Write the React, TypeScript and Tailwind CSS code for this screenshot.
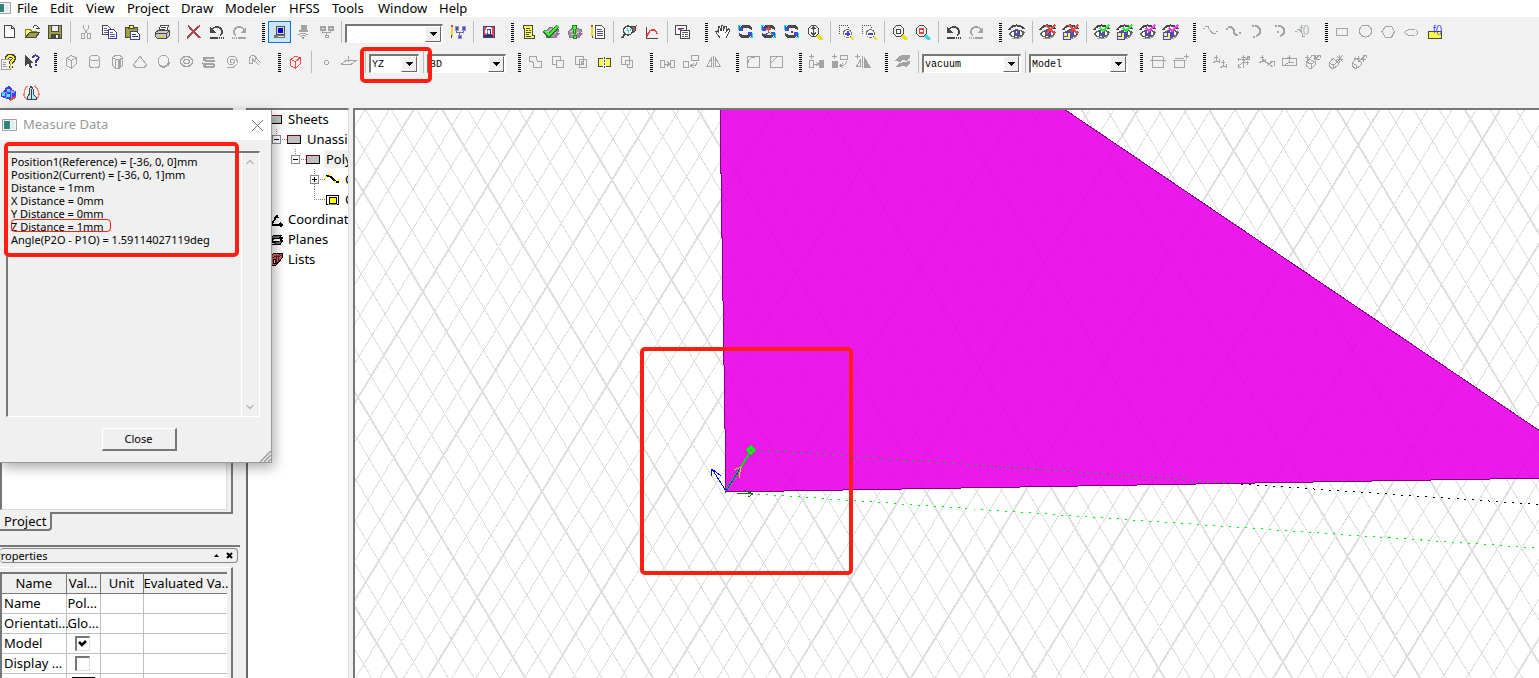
import type { ReactNode } from "react";
import { X, ChevronUp, ChevronDown } from "lucide-react";

const DARK = "#484848";
const OFF = "#a3a3a3";

const EYE = (
  <g fill="none">
    <path d="M1 6Q4 1 9 1.500Q14 2 16 5" stroke={DARK} strokeWidth="2" />
    <path d="M1.500 10Q8 3 16 8.500Q14 13 8 13.500Q4 13 1.500 10Z" fill="#fff" stroke="#606060" strokeWidth="1.500" />
    <path d="M4 14.500H11L15 12" stroke="#a0a0a0" />
    <circle cx="9" cy="9" r="3" fill="#5050c0" stroke="#505080" />
    <path d="M8.500 6.500v2" stroke="#fff" />
  </g>
);
const STAMP = (
  <g>
    <rect x="1.500" y="8.500" width="7" height="7" fill="#ffff60" stroke="#4040ff" />
    <path d="M1.500 12.500H5.500V8.500" fill="none" stroke="#4040ff" />
  </g>
);
const CROSS = <path d="M7 1L16 10M16 1L7 10" stroke="#f04848" strokeWidth="2" />;
const LENS = (
  <g fill="none">
    <path d="M11 11L16 16" stroke="#e8e020" strokeWidth="3" />
    <circle cx="7.500" cy="7" r="5.500" stroke={DARK} fill="#f4f4f4" />
  </g>
);
const ORBIT = (
  <g fill="none">
    <path d="M1 1h3v1H1zM1 2h1v4H1zM13 13h3v1h-3zM15 9h1v4h-1z" fill="#00e8ff" />
    <path d="M4 4.500L6 2.500H12L15 5M13 10.500L11 12.500H5L2 10" stroke={DARK} strokeWidth="2.500" />
    <path d="M2 2V7H6V5ZM15 13V8H11V10Z" fill="#4848f0" />
  </g>
);
const UNDO = (color: string) => (
  <g fill="none" stroke={color}>
    <path d="M3 7Q5 2.500 10 3Q15 5 14 9L12 11.500" strokeWidth="1.500" />
    <path d="M2 3V9H8Z" fill={color} stroke="none" />
    <path d="M2 13.500H10M11 13.500h1M13 13.500h1M15 13.500h1" strokeWidth="2" />
  </g>
);
const AXES = (x: number, y: number) => (
  <path d={`M${x} ${y - 3}V${y + 3}L${x - 3} ${y + 5}M${x} ${y + 3}H${x + 4}M${x - 2} ${y - 1}H${x + 2}M${x + 3} ${y + 1}V${y + 5}`} fill="none" stroke={OFF} />
);
const CHIP = (
  <g>
    <path d="M2 8L7 3L16 6L12 13L4 14Z" fill="#9c9c9c" stroke="#777" />
    <path d="M4 8L9 5M6 11L13 8" stroke="#d0d0d0" />
    <path d="M12 14L16 9" stroke="#c060c0" strokeWidth="2" />
  </g>
);
const NOTE = (x: string) => (
  <text x={x} y="9" fontSize="10" fontFamily="Liberation Sans, sans-serif" fill="currentColor">f()</text>
);

const ICONS: Record<string, ReactNode> = {
  "New": <path d="M4.500 1.500H11.500L14.500 4.500V13.500H4.500ZM11.500 1.500V4.500H14.500" fill="#fff" stroke={DARK} />,
  "Open": (
    <g stroke={DARK}>
      <path d="M2.500 13.500V5.500H7.500L8.500 7.500H13.500V13.500Z" fill="#ffff70" stroke="#808020" />
      <path d="M2.500 13.500L6.500 8.500H16.500L12.500 13.500Z" fill="#a0a040" />
      <path d="M10 3.500Q12 0 15 3V5M13 4.500H17" fill="none" />
    </g>
  ),
  "Save": (
    <g stroke={DARK}>
      <path d="M2.500 1.500H15.500V14.500H2.500Z" fill="#a0a040" strokeWidth="1.500" />
      <path d="M5.500 1.500H12.500V7.500H5.500Z" fill="#ececec" />
      <path d="M5 10H13V14H5Z" fill={DARK} />
      <path d="M10 11h2v3h-2z" fill="#eee" stroke="none" />
    </g>
  ),
  "Cut": (
    <g fill="none" stroke={OFF}>
      <path d="M6.500 1V4L11 10.500M11.500 1V4L7 10.500" />
      <ellipse cx="6" cy="12" rx="2" ry="2.500" />
      <ellipse cx="12" cy="12" rx="2" ry="2.500" />
    </g>
  ),
  "Copy": (
    <g fill="#fff">
      <path d="M2.500 1.500H7.500L10.500 4.500V10.500H2.500Z" stroke={DARK} />
      <path d="M4 4.500h3M4 6.500h5M4 8.500h5" stroke="#6060a0" />
      <path d="M8.500 5.500H13.500L16.500 8.500V14.500H8.500Z" stroke="#4040a0" />
      <path d="M10 8.500h3M10 10.500h5M10 12.500h5" stroke="#6060a0" />
    </g>
  ),
  "Paste": (
    <g>
      <path d="M2.500 3.500H14.500V13.500H2.500Z" fill="#a0a040" stroke={DARK} />
      <path d="M5.500 4.500L7 1.500H10L11.500 4.500Z" fill="#ffff40" stroke={DARK} />
      <path d="M7.500 7.500H13.500L16.500 10.500V15.500H7.500Z" fill="#fff" stroke="#4040a0" />
      <path d="M9 10.500h4M9 12.500h6" stroke="#4040a0" />
    </g>
  ),
  "Print": (
    <g stroke={DARK}>
      <path d="M6.500 1.500H14.500L12.500 7.500H4.500Z" fill="#fff" />
      <path d="M7 3.500h5M6 5.500h5" />
      <path d="M1.500 8.500L4 6.500H15.500V11.500L12.500 14.500H3.500L1.500 12.500Z" fill="#c8c8c8" />
      <path d="M1.500 9.500H12.500V14M12.500 9.500L15.500 7" fill="none" />
      <path d="M5 12h4v1H5z" fill="#e0e020" stroke="#d0d030" />
    </g>
  ),
  "Delete": <path d="M3 1.500L15 14M15 1.500L2 14" stroke="#a84848" strokeWidth="2" />,
  "Undo": UNDO(DARK),
  "Redo": <g transform="translate(17 0) scale(-1 1)">{UNDO(OFF)}</g>,
  "Local machine": (
    <g>
      <path d="M5.500 2.500H13.500V10.500H5.500Z" fill="#d8d8d8" stroke="#505050" />
      <path d="M7 4H12V9H7Z" fill="#0000e0" />
      <path d="M3.500 11.500H13.500V13.500H3.500Z" fill="#e8e8e8" stroke="#707070" />
      <path d="M4 12.500h3" stroke="#20c040" />
    </g>
  ),
  "Remote machine": (
    <g fill="none" stroke={OFF}>
      <path d="M7 1h5v4h-5zM5 6h8v1h-8z" fill={OFF} />
      <path d="M4 11Q9 7 14 11M6 13Q9 10 12 13" />
      <path d="M8 14h2" strokeWidth="2" />
    </g>
  ),
  "Distributed": (
    <g stroke={OFF} fill="none">
      <path d="M3.500 2.500h4v3h-4zM11.500 2.500h4v3h-4z" strokeWidth="2" />
      <path d="M5.500 6V8.500H13.500V6M9.500 8.500V12" />
      <path d="M8.500 11.500h3v2h-3z" />
    </g>
  ),
  "Edit distribution": (
    <g fill="none">
      <path d="M2.500 2V12" stroke="#f0d820" strokeWidth="2" />
      <path d="M2.500 1v2" stroke="#e04040" strokeWidth="2" />
      <path d="M2.500 11v3" stroke={DARK} />
      <path d="M6 2h3v4H6zM13 2h3v4h-3zM9 11h3v3H9z" fill="#4848d8" stroke="#9090b8" />
      <path d="M7 7V8.500H14V7M10.500 8.500V11" stroke="#6868b0" />
    </g>
  ),
  "Queue": (
    <g>
      <path d="M3 2h11v11H3z" fill="#f04848" stroke="#404080" />
      <path d="M4 11h9v2H4z" fill="#303070" />
      <path d="M6 4L8 3H11L12 5V10L10 11H7L5 9Z" fill="#f8f8ff" />
      <path d="M7 5h3v5H7z" fill="none" stroke="#3030a0" />
      <path d="M7 6v3" stroke="#00d8d8" />
    </g>
  ),
  "Message list": (
    <g>
      <path d="M3.500 1.500H12.500V11.500H14.500V14.500H4.500V4.500H3.500Z" fill="#ffff50" stroke={DARK} />
      <path d="M6 4.500h4M6 6.500h2M9 6.500h2M6 8.500h5M6 10.500h3M6 12.500h5" stroke={DARK} />
    </g>
  ),
  "Validate": (
    <g>
      {CHIP}
      <path d="M1 7L6 12L15 2" fill="none" stroke="#306830" strokeWidth="4" />
      <path d="M2 7L6 11L15 2" fill="none" stroke="#40f040" strokeWidth="2.500" />
    </g>
  ),
  "Analyze all": (
    <g>
      {CHIP}
      <path d="M6.500 1H10.500L9.500 9H7.500ZM7 11.500h3v3H7z" fill="#48f048" stroke="#308030" />
    </g>
  ),
  "Edit notes": (
    <g>
      <path d="M3 2V12" stroke="#f0d820" strokeWidth="2" />
      <path d="M3 1v2" stroke="#e04040" strokeWidth="2" />
      <path d="M3 12v2" stroke={DARK} />
      <path d="M6.500 1.500H12.500L15.500 4.500V14.500H6.500Z" fill="#fff" stroke={DARK} />
      <path d="M8 5.500h5M8 7.500h6M8 9.500h6M8 11.500h6" stroke="#505090" />
    </g>
  ),
  "Results": (
    <g>
      <path d="M10 3L16 2L15 7L12 9Z" fill="#a06060" stroke={DARK} />
      <circle cx="8" cy="6.500" r="4.500" fill="#e8fafa" stroke={DARK} strokeWidth="1.500" />
      <path d="M7 4L9 9M10 5V7" stroke="#40c8d8" />
      <path d="M5 10L2 14" stroke={DARK} strokeWidth="2" />
    </g>
  ),
  "Plot": (
    <g fill="none">
      <path d="M3.500 3V14.500H15" stroke={DARK} />
      <path d="M4 13Q6 6 9 6Q13 5 14 10" stroke="#f04040" strokeWidth="1.500" />
    </g>
  ),
  "Copy image": (
    <g fill="#fff" stroke={DARK}>
      <path d="M1.500 1.500H12.500V10.500H1.500Z" />
      <path d="M4 4.500H10" stroke="#4040c0" />
      <path d="M4 6L7 5L10 9" stroke="#f04040" fill="none" />
      <path d="M6.500 6.500H15.500V14.500H6.500Z" />
      <path d="M8 8.500h6M8 10.500h2M11 10.500h3M8 12.500h2M11 12.500h3" stroke="#606060" />
    </g>
  ),
  "Pan": (
    <path d="M6 14L2.500 9L1.500 7.500L3.500 7L5 9L4 3L5.500 2.500L7 7V1.500H9L9.500 7L11 2L12.500 2.500L12 8L14.500 5L16 6L13 12L12 14" fill="#fff" stroke={DARK} />
  ),
  "Rotate model": ORBIT,
  "Rotate axis": (
    <g>
      {ORBIT}
      <path d="M9 8L4 12" fill="none" stroke="#4040f0" />
      <path d="M9 8L14 12" fill="none" stroke="#40c040" />
      <path d="M8.500 2V8M6 5h5" stroke="#f04040" strokeWidth="1.500" />
    </g>
  ),
  "Rotate screen": <g>{ORBIT}<path d="M8 7h2v2H8z" fill={DARK} /></g>,
  "Dynamic zoom": <g>{LENS}<path d="M7.500 4V10M5.500 5.500L7.500 3L9.500 5.500M5.500 8.500L7.500 11L9.500 8.500" fill="none" stroke={DARK} strokeWidth="1.500" /></g>,
  "Zoom in": (
    <g fill="none">
      <path d="M2.500 10V1.500H11V5" stroke={DARK} strokeDasharray="1 1" />
      <path d="M13 12L17 16" stroke="#e8e020" strokeWidth="2.500" />
      <circle cx="10.500" cy="9.500" r="4" stroke="#707070" fill="#fff" />
      <path d="M8 9.500H13M10.500 7V12" stroke="#4040ff" strokeWidth="2" />
    </g>
  ),
  "Zoom out": (
    <g fill="none">
      <path d="M2.500 10V1.500H11V5" stroke={DARK} strokeDasharray="1 1" />
      <path d="M13 12L17 16" stroke="#e8e020" strokeWidth="2.500" />
      <circle cx="10.500" cy="9.500" r="4" stroke="#707070" fill="#fff" />
      <path d="M8 9.500H13" stroke="#4040ff" strokeWidth="2" />
    </g>
  ),
  "Fit all": <g>{LENS}<path d="M5.500 5h4v4h-4z" fill="none" stroke={DARK} /></g>,
  "Fit selection": (
    <g>
      <path d="M11 11L16 16" stroke="#40d8d8" strokeWidth="3" />
      <circle cx="7.500" cy="7" r="5.500" stroke={DARK} fill="#f4f4f4" />
      <path d="M5.500 5h4v4h-4z" fill="none" stroke="#f04040" strokeWidth="1.500" />
    </g>
  ),
  "Show": EYE,
  "Hide selection": <g>{EYE}{CROSS}</g>,
  "Hide in view": <g>{EYE}{CROSS}{STAMP}</g>,
  "Show all": <g>{EYE}<path d="M7 4L10 7L16 1" fill="none" stroke="#30f040" strokeWidth="2" /></g>,
  "Show all in view": <g>{EYE}<path d="M7 4L10 7L16 1" fill="none" stroke="#30f040" strokeWidth="2" />{STAMP}</g>,
  "Show selection": <g>{EYE}<path d="M7 4L10 7L16 1" fill="none" stroke="#f040f0" strokeWidth="2" /></g>,
  "Show selection in view": <g>{EYE}<path d="M7 4L10 7L16 1" fill="none" stroke="#f040f0" strokeWidth="2" />{STAMP}</g>,
  "Line": <path d="M1 4.500H3M3 2.500H6V4L11 9.500H14M14 7.500h2" fill="none" stroke={OFF} />,
  "Spline": <path d="M1 5h2M3 3h3M6 3L9 6V9L11 11H13M14 9h2" fill="none" stroke={OFF} strokeWidth="1.500" />,
  "Arc": <path d="M4 2h2M7 2H9Q12 3 12 7T8 12M5 13h2" fill="none" stroke={OFF} strokeWidth="2" />,
  "Center arc": <path d="M4 2h2M7 2H9Q13 3 13 7T9 12M6 8h2" fill="none" stroke={OFF} strokeWidth="2" />,
  "Equation curve": <g color={OFF}><path d="M1 7h2M3 5h2L8 9V12H11" fill="none" stroke={OFF} />{NOTE("6")}</g>,
  "Rectangle": <path d="M2.500 4.500H13.500V11.500H2.500Z" fill="none" stroke={OFF} />,
  "Circle": <circle cx="8.500" cy="7" r="6" fill="none" stroke={OFF} />,
  "Polygon": <path d="M5.500 2.500H11.500L14.500 7.500L11.500 13.500H5.500L2 7.500Z" fill="none" stroke={OFF} />,
  "Ellipse": <ellipse cx="8.500" cy="8.500" rx="6.500" ry="3" fill="none" stroke={OFF} />,
  "Equation surface": (
    <g color="#4040ff">
      <path d="M2.500 7.500H15.500V14.500H2.500Z" fill="#ffff40" stroke={DARK} strokeWidth="1.500" />
      {NOTE("7")}
    </g>
  ),
  "Help topics": (
    <g fill="none">
      <path d="M1.500 5.500H10.500V15.500H1.500Z" fill="#f4f4f4" stroke="#a0a0a0" />
      <path d="M3 8.500h3M3 10.500h3M3 12.500h4" stroke="#999" />
      <path d="M7 5V3.500Q10 0 13 2.500Q16 5 11 8V10M11 12v2" stroke="#404040" strokeWidth="4" />
      <path d="M7 5V3.500Q10 1 13 3Q15 5 11 8V10M11 12v2" stroke="#fff020" strokeWidth="2" />
    </g>
  ),
  "Context help": (
    <g>
      <path d="M2 1V12L5 9L7 14H9L7.500 9H11Z" fill={DARK} />
      <path d="M10 4V2.500Q13 0 15.500 3Q16 5 13 7V9M12 11h2" fill="none" stroke="#404098" strokeWidth="2" />
    </g>
  ),
  "Box": <path d="M3.500 4.500L8 1.500L13.500 3.500V9.500L8.500 14.500L3.500 11.500ZM3.500 4.500L8.500 6.500L13.500 3.500M8.500 6.500V14.500" fill="none" stroke={OFF} />,
  "Cylinder": <path d="M3.500 4Q3.500 1.500 8.500 1.500T13.500 4V11Q13.500 14 8.500 14T3.500 11ZM3.500 4Q4 6.500 8.500 6.500T13.500 4" fill="none" stroke={OFF} />,
  "Regular polyhedron": <g><path d="M3.500 3.500L6 1.500H11L13.500 3.500V11.500L11 14H6L3.500 11.500ZM3.500 3.500L6 5H11L13.500 3.500M6.500 5V14" fill="none" stroke={OFF} /><path d="M9 5h3v9H9z" fill={OFF} /></g>,
  "Cone": <path d="M8 2L14.500 11L12 13.500H4L1.500 11Z" fill="none" stroke={OFF} />,
  "Sphere": <g fill="none" stroke={OFF}><circle cx="8.500" cy="7" r="5.500" /><path d="M4 11Q8.500 14.500 13 11L14 8" strokeWidth="2" /></g>,
  "Torus": <g fill="none" stroke={OFF}><ellipse cx="8.500" cy="7.500" rx="6" ry="5" strokeWidth="1.500" /><ellipse cx="8.500" cy="7.500" rx="3" ry="2" strokeWidth="1.500" /></g>,
  "Helix": <path d="M2 3H13V5H5V6H14V8H4V7H2V9H13V11H5V12H12L14 9V12L12 14H3L2 12V10H1V8H2Z" fill={OFF} />,
  "Spiral": <path d="M3 13Q10 15 13 10Q14 3 9 2Q3 2 3 7Q4 11 8 11Q11 9 10 6Q8 4 6 6V8H8" fill="none" stroke={OFF} />,
  "Bondwire": <path d="M2.500 10V4L4.500 1.500H7L14.500 9.500M5.500 10V5L12 11M2 9.500H6M8 3V6" fill="none" stroke={OFF} />,
  "Region": <path d="M3.500 5.500L8 2.500L13.500 3.500V9.500L8.500 14.500L3.500 11.500ZM3.500 5.500L8.500 7.500L13.500 3.500M8.500 7.500V14.500" fill="none" stroke="#f04848" />,
  "Point": <circle cx="8.500" cy="8.500" r="2" fill="none" stroke={OFF} />,
  "Plane": <path d="M0 10.500L5 6.500H15L10 10.500ZM7.500 2V8" fill="none" stroke={OFF} />,
  "Unite": <path d="M2.500 2.500H9.500V5.500L11 7.500H14.500V13.500H6.500V9L5 7.500H2.500Z" fill="none" stroke={OFF} />,
  "Subtract": <path d="M2.500 2.500H10.500V6.500H6.500V10.500H2.500ZM6.500 6.500H13.500V13.500H6.500V10" fill="none" stroke={OFF} />,
  "Intersect": <path d="M2.500 2.500H10.500V10.500H2.500ZM6.500 5.500H13.500V13.500H6.500ZM8 7.500h2v2H8z" fill="none" stroke={OFF} />,
  "Split": <g><path d="M2.500 4.500H14.500V12.500H2.500Z" fill="#ffff48" stroke={DARK} /><path d="M8.500 3V14" stroke="#f8f8f8" strokeWidth="3" /><path d="M8.500 3V14" stroke={DARK} strokeDasharray="2 1" /></g>,
  "Imprint": <path d="M2.500 2.500H10.500V10.500H2.500ZM6.500 10V6.500H13.500V13.500H8.500V10" fill="none" stroke={OFF} />,
  "Move": <path d="M1.500 6.500H5.500V13.500H1.500ZM11.500 6.500H15.500V13.500H11.500ZM6 10H10M8 7.500L10.500 10L8 12.500" fill="none" stroke={OFF} />,
  "Rotate": <path d="M1.500 7.500H6.500V13.500H1.500ZM9.500 1.500H16.500V6.500H9.500ZM15 8Q15 12 9 12M12 9L8.500 12L12 14" fill="none" stroke={OFF} />,
  "Mirror": <path d="M8.500 2V14M6.500 4V12.500H1.500ZM10.500 4V12.500H15.500Z" fill="none" stroke={OFF} />,
  "Fillet": <path d="M2.500 13.500V2.500H14.500V13.500ZM3 9Q4 3 10 3" fill="none" stroke={OFF} />,
  "Chamfer": <path d="M2.500 13.500V2.500H14.500V13.500ZM2.500 9.500L9.500 2.500" fill="none" stroke={OFF} />,
  "Duplicate line": <g stroke={OFF} fill="none"><path d="M3.500 0V5M1 2.500H6M1.500 6.500H5.500V13.500H1.500ZM6 10H10M8 8L10.500 10L8 12" /><path d="M11 6h5v8h-5z" fill={OFF} stroke="none" /></g>,
  "Duplicate axis": <g stroke={OFF} fill="none"><path d="M3.500 0V5M1 2.500H6M9.500 1.500H16.500V5.500H9.500ZM15.500 7Q15 12 9 11.500M12 9L9 11.500L12 14" /><path d="M1 7h6v7H1z" fill={OFF} stroke="none" /></g>,
  "Duplicate mirror": <g stroke={OFF} fill="none"><path d="M3.500 0V5M1 2.500H6M8.500 2V14M6.500 5V12.500H2.500Z" /><path d="M10.500 4V13H16Z" fill={OFF} /></g>,
  "Layers": <path d="M1 7L5 2L9 1H16V3L13 7L9 6L6 8ZM1 13L5 9L10 8L16 7V9L13 13L9 12L5 13Z" fill={OFF} />,
  "Section": <path d="M3 2.500H14M3.500 3V6M14.500 3V6M1 6.500H16.500M3.500 7V13.500H14.500V7" fill="none" stroke={OFF} />,
  "Section add": <path d="M1 6.500H14M2.500 7V13.500H12.500V7M3 4.500H12M14.500 0V5M12 2.500H17" fill="none" stroke={OFF} />,
  "Relative offset": <g>{AXES(4, 4)}{AXES(11, 9)}</g>,
  "Relative rotated": <path d="M8.500 1V14M6 3.500H11M8 8L3 13M3 10V13.500H6M3 5.500H14M3 4V7M8 7L14 3M12 2.500H14.500V6M8 8L14 9M12 7V11" fill="none" stroke={OFF} />,
  "Relative both": <g>{AXES(4, 4)}<path d="M4 5L15 13M15 7L9 12M12 7h4v5" fill="none" stroke={OFF} /></g>,
  "Face CS": <path d="M1.500 4.500H15.500V11.500H1.500ZM8 1V8.500L4 10.500M8 8.500H13M6 3.500h4" fill="none" stroke={OFF} />,
  "Object CS offset": <path d="M2 8L6 5.500L11 8V11L7 15L2 12ZM2 8L7 10V15M7 10L12 7M3 6V1M1 3h4M4 6L9 1M7 1.500h3v3M11 6V1M10 6L16 1M13 1h3v3M12 5h4" fill="none" stroke={OFF} />,
  "Object CS rotated": <path d="M2 9L6 4.500L11 8V11L6 15L2 12ZM2 9L6 11V15M6 11L11 8M12 1V9M10 5H16M10 8L16 1M10 2L16 8" fill="none" stroke={OFF} />,
  "Object CS both": <path d="M2 9L6 4.500L11 8V11L6 15L2 12ZM2 9L6 11V15M8 2V8M4 4H10M8 8L16 1M13 1h3v3M10 5h6M13 3v5" fill="none" stroke={OFF} />,
  "Mesh": (
    <g>
      <path d="M1 8L5 5V3L9 1L12 3V5L16 6V11L10 15L1 12Z" fill="#4040f0" />
      <path d="M2 8h3v3H2zM7 4h3v2H7zM7 9h3v3H7zM12 6h2v2h-2z" fill="#40f0ff" />
      <path d="M1 7L7 7L15 6M6 7V13M11 5V13" fill="none" stroke="#9098f8" />
      <path d="M10 15L16 11.500" stroke="#f04040" strokeWidth="2" />
    </g>
  ),
  "Radiation": (
    <g fill="none">
      <path d="M4 1Q0 6 1.500 12L4 15M12 1Q17 6 15.500 12L13 15" stroke="#f08070" strokeWidth="1.500" />
      <path d="M8 1L10 4V9L13 12V14H4V12L6.500 9V4Z" fill="#b8e8e8" stroke="#404070" />
      <path d="M8.500 4V15" stroke="#404040" />
    </g>
  ),
};

function Tool({ name, active = false }: { name: string; active?: boolean }) {
  return (
    <button
      type="button"
      title={name}
      aria-label={name}
      className={`flex h-[22px] w-[23px] shrink-0 items-center justify-center ${active ? "bg-[#cce4f7] outline outline-[#0078d7] -outline-offset-1" : ""}`}
    >
      <svg viewBox="0 0 17 16" className="h-4 w-[17px] shrink-0" shapeRendering="crispEdges" aria-hidden="true">
        {ICONS[name]}
      </svg>
    </button>
  );
}

function Tools({ names }: { names: string[] }) {
  return names.map((name) => <Tool key={name} name={name} />);
}

function Separator() {
  return (
    <div className="flex w-2 shrink-0 justify-center">
      <div className="h-[22px] w-px bg-[#bdbdbd]" />
    </div>
  );
}

function Grip() {
  return (
    <div className="flex w-[17px] shrink-0 justify-end pr-[3px]">
      <div className="h-[19px] w-[3px] bg-[repeating-linear-gradient(to_bottom,#000_0_1px,transparent_1px_2px)]" />
    </div>
  );
}

function Combo({ label, value, className }: { label: string; value: string; className: string }) {
  return (
    <div className={`mt-[3px] flex h-[19px] shrink-0 border-t-2 border-l-2 border-r border-b border-t-[#777] border-l-[#777] border-r-white border-b-white bg-white ${className}`}>
      <select
        aria-label={label}
        defaultValue={value}
        className="min-w-0 flex-1 appearance-none overflow-hidden bg-white px-px pt-px font-['Liberation_Mono','Noto_Sans_CJK_SC',monospace] text-[10px] leading-4 text-black outline-none"
      >
        <option>{value}</option>
      </select>
      <span className="pointer-events-none mr-px flex w-4 shrink-0 items-center justify-center border border-t-white border-l-white border-r-[#696969] border-b-[#696969] bg-[#f0f0f0]">
        <svg viewBox="0 0 7 4" className="h-1 w-[7px]" shapeRendering="crispEdges" aria-hidden="true">
          <path d="M0 0H7L3.500 4Z" />
        </svg>
      </span>
    </div>
  );
}

function WindowIcon() {
  return (
    <svg viewBox="0 0 15 12" className="h-3 w-[15px] shrink-0" aria-hidden="true">
      <path d="M.5.5H14.500V11.500H.5Z" fill="#f4f4f4" stroke="#9aa4a8" />
      <path d="M2 2H8V10H2Z" fill="#2f8577" />
      <path d="M9 2h3v8H9z" fill="#dfe9ee" />
    </svg>
  );
}

const MENUS = [
  { label: "File", width: "w-[33px]" },
  { label: "Edit", width: "w-[36px]" },
  { label: "View", width: "w-[41px]" },
  { label: "Project", width: "w-[54px]" },
  { label: "Draw", width: "w-[44px]" },
  { label: "Modeler", width: "w-[64px]" },
  { label: "HFSS", width: "w-[43px]" },
  { label: "Tools", width: "w-[46px]" },
  { label: "Window", width: "w-[61px]" },
  { label: "Help", width: "w-[40px]" },
];

function MenuBar() {
  return (
    <nav className="flex h-[17px] items-center overflow-hidden bg-white pb-[2px]" aria-label="Main menu">
      <div className="-ml-1 mr-[6px] flex">
        <WindowIcon />
      </div>
      {MENUS.map((menu) => (
        <button key={menu.label} type="button" className={`shrink-0 text-left text-[13px] leading-4 ${menu.width}`}>
          {menu.label}
        </button>
      ))}
    </nav>
  );
}

function Toolbars() {
  return (
    <div className="bg-[#f1f1f1] pb-px">
      <div className="-ml-[3px] flex h-[30px] items-center overflow-hidden" role="toolbar" aria-label="Standard">
        <Tools names={["New", "Open", "Save"]} />
        <Separator />
        <Tools names={["Cut", "Copy", "Paste"]} />
        <Separator />
        <Tool name="Print" />
        <Separator />
        <Tools names={["Delete", "Undo", "Redo"]} />
        <Grip />
        <Tool name="Local machine" active />
        <Tools names={["Remote machine", "Distributed"]} />
        <Separator />
        <Combo label="Configuration" value="" className="mr-[3px] w-[98px]" />
        <Tool name="Edit distribution" />
        <Separator />
        <Tool name="Queue" />
        <Grip />
        <Tools names={["Message list", "Validate", "Analyze all", "Edit notes"]} />
        <Separator />
        <Tools names={["Results", "Plot"]} />
        <Separator />
        <Tool name="Copy image" />
        <Grip />
        <Tools names={["Pan", "Rotate model", "Rotate axis", "Rotate screen", "Dynamic zoom"]} />
        <Separator />
        <Tools names={["Zoom in", "Zoom out"]} />
        <Separator />
        <Tools names={["Fit all", "Fit selection"]} />
        <Separator />
        <Tools names={["Undo", "Redo"]} />
        <Grip />
        <Tool name="Show" />
        <Separator />
        <Tools names={["Hide selection", "Hide in view"]} />
        <Separator />
        <Tools names={["Show all", "Show all in view", "Show selection", "Show selection in view"]} />
        <Grip />
        <Tools names={["Line", "Spline", "Arc", "Center arc", "Equation curve"]} />
        <Grip />
        <Tools names={["Rectangle", "Circle", "Polygon", "Ellipse", "Equation surface"]} />
      </div>
      <div className="-ml-[3px] flex h-[30px] items-center" role="toolbar" aria-label="Modeler">
        <Tools names={["Help topics", "Context help"]} />
        <Grip />
        <Tools names={["Box", "Cylinder", "Regular polyhedron", "Cone", "Sphere", "Torus", "Helix", "Spiral", "Bondwire"]} />
        <Grip />
        <Tool name="Region" />
        <Separator />
        <Tools names={["Point", "Plane"]} />
        <Separator />
        <div className="relative flex">
          <Combo label="Drawing plane" value="YZ" className="w-[50px]" />
          <div className="pointer-events-none absolute -top-[4px] -left-[9px] z-10 h-9 w-[72px] rounded-[5px] border-4 border-[#ff1f10]" />
        </div>
        <Separator />
        <Combo label="Movement mode" value="3D" className="mr-px w-[79px]" />
        <Grip />
        <Tools names={["Unite", "Subtract", "Intersect", "Split", "Imprint"]} />
        <Grip />
        <Tools names={["Move", "Rotate", "Mirror"]} />
        <Grip />
        <Tools names={["Fillet", "Chamfer"]} />
        <Grip />
        <Tools names={["Duplicate line", "Duplicate axis", "Duplicate mirror"]} />
        <Grip />
        <Tool name="Layers" />
        <Separator />
        <Combo label="Material" value="vacuum" className="w-[99px]" />
        <Separator />
        <Combo label="Object type" value="Model" className="mr-px w-[99px]" />
        <Grip />
        <Tools names={["Section", "Section add"]} />
        <Grip />
        <Tools names={["Relative offset", "Relative rotated", "Relative both", "Face CS", "Object CS offset", "Object CS rotated", "Object CS both"]} />
      </div>
      <div className="-ml-[3px] flex h-[30px] items-center pt-0.5" role="toolbar" aria-label="Analysis">
        <Tools names={["Mesh", "Radiation"]} />
      </div>
    </div>
  );
}

const PROPERTIES = [
  { name: "Name", value: "Pol..." },
  { name: "Orientati...", value: "Glo..." },
  { name: "Model", checked: true },
  { name: "Display ...", checked: false },
];

function CheckCell({ label, checked }: { label: string; checked: boolean }) {
  return (
    <label className="relative mr-0.5 flex justify-center">
      <input
        type="checkbox"
        aria-label={label}
        defaultChecked={checked}
        className="peer h-[15px] w-[15px] appearance-none border-t-2 border-l-2 border-r border-b border-t-[#777] border-l-[#777] border-r-[#ddd] border-b-[#ddd] bg-white"
      />
      <svg viewBox="0 0 15 15" className="pointer-events-none invisible absolute h-[15px] w-[15px] peer-checked:visible" aria-hidden="true">
        <path d="M4 6L7 9L11 5" fill="none" stroke="#000" strokeWidth="2.500" />
      </svg>
    </label>
  );
}

function PropertiesPanel() {
  return (
    <section className="h-[133px] w-[240px] shrink-0 overflow-hidden border-t-2 border-[#777]" aria-label="Properties">
      <header className="mt-px mr-[2px] flex h-[15px] items-center overflow-hidden rounded-sm border border-l-0 border-[#888] pb-px text-[11px]">
        <h2 className="-ml-[6px] flex-1 leading-[13px]">Properties</h2>
        <button type="button" aria-label="Collapse" className="mr-[7px]">
          <svg viewBox="0 0 5 3" className="h-[3px] w-[5px]" aria-hidden="true"><path d="M0 3L2.500 0L5 3Z" /></svg>
        </button>
        <button type="button" aria-label="Close properties" className="mr-1">
          <svg viewBox="0 0 7 7" className="h-[7px] w-[7px]" aria-hidden="true"><path d="M1 1L6 6M6 1L1 6" stroke="#000" strokeWidth="2" /></svg>
        </button>
      </header>
      <div className="mt-1 mr-[7px] border-t border-r-2 border-t-white border-r-[#777] pt-1 pr-1">
        <table className="w-full table-fixed border-collapse border-t-2 border-l-2 border-[#777] bg-white text-[13px] leading-4">
          <colgroup>
            <col className="w-[65px]" />
            <col className="w-[34px]" />
            <col className="w-[43px]" />
            <col />
          </colgroup>
          <thead>
            <tr className="h-5 bg-[#f0f0f0]">
              {["Name", "Val...", "Unit", "Evaluated Va.."].map((title) => (
                <th key={title} scope="col" className="border-r border-b border-[#777] p-0 text-center font-normal whitespace-nowrap last:border-r-0">
                  {title}
                </th>
              ))}
            </tr>
          </thead>
          <tbody>
            {PROPERTIES.map((row) => (
              <tr key={row.name} className="h-5">
                <td className="border-r border-b border-[#c0c0c0] p-0 pl-0.5 whitespace-nowrap">{row.name}</td>
                <td className="border-r border-b border-[#c0c0c0] p-0 pl-px whitespace-nowrap">
                  {row.checked === undefined ? row.value : <CheckCell label={row.name} checked={row.checked} />}
                </td>
                <td className="border-r border-b border-[#c0c0c0] p-0" />
                <td className="border-b border-[#c0c0c0] p-0" />
              </tr>
            ))}
            <tr className="h-5">
              <td className="border-r border-[#c0c0c0] p-0" />
              <td className="border-r border-[#c0c0c0] px-[5px] pt-[3px] pb-0 align-top"><div className="h-3 bg-black" /></td>
              <td className="border-r border-[#c0c0c0] p-0" />
              <td className="p-0" />
            </tr>
          </tbody>
        </table>
      </div>
    </section>
  );
}

function ProjectPanel() {
  return (
    <section className="flex min-h-0 w-[240px] flex-1 flex-col" aria-label="Project manager">
      <div className="mr-[7px] flex min-h-0 flex-1 flex-col border-t-2 border-r-2 border-b-2 border-[#777] pr-1 pb-[2px]">
        <div className="flex-1 border-r border-b border-l-2 border-r-[#ddd] border-b-[#ddd] border-l-[#777] bg-white" />
      </div>
      <div className="flex h-[31px] items-start">
        <button type="button" className="-mt-0.5 h-[19px] w-[52px] rounded-br-sm border-r-2 border-b-2 border-[#777] bg-[#f0f0f0] pl-1 text-left text-[13px] leading-4">
          Project
        </button>
      </div>
    </section>
  );
}

type TreeRow = { label: string; indent: string; icon: string; node?: "open" | "closed" | "leaf"; selected?: boolean };

const TREE: TreeRow[] = [
  { label: "Sheets", indent: "pl-5", icon: "sheet" },
  { label: "Unassigned", indent: "pl-6", icon: "sheet", node: "open" },
  { label: "Polyline1", indent: "pl-[43px]", icon: "sheet", node: "open", selected: true },
  { label: "CreatePolyline", indent: "pl-[62px]", icon: "line", node: "closed" },
  { label: "CoverLines", indent: "pl-[62px]", icon: "cover", node: "leaf" },
  { label: "Coordinate Systems", indent: "pl-5", icon: "axes" },
  { label: "Planes", indent: "pl-5", icon: "planes" },
  { label: "Lists", indent: "pl-5", icon: "lists" },
];

const TREE_ICONS: Record<string, ReactNode> = {
  sheet: <g><path d="M0 3h14v9H0z" fill="#800000" /><path d="M1 4h12v7H1z" fill="#c0c0c0" /><path d="M0 11h14v1H0zM13 4h1v7h-1z" /></g>,
  line: <g fill="none" stroke="#000"><path d="M1 4H5L11 10H14" strokeWidth="1.500" /><path d="M0 5h2M4 3h2M9 10h2M13 8h2" stroke="#ffff00" strokeWidth="2" /></g>,
  cover: <g><path d="M1.500 3.500H13.500V12.500H1.500Z" fill="#fff" stroke="#000" strokeWidth="1.500" /><path d="M4 5h7v6H4z" fill="#ffff00" stroke="#000" /><path d="M3 12.500h9" stroke="#888" /></g>,
  axes: <path d="M9 4L3 13H14M7 6L9 3.500L10 6M12 11L14 13L12 15" fill="none" stroke="#000" strokeWidth="1.500" />,
  planes: <g stroke="#000"><path d="M3 10L6 6H14L12 10Z" fill="#fff" strokeWidth="2" /><path d="M3 6L6 3H14L11 6ZM3 12.500H12L15 8" fill="#666" /></g>,
  lists: <g stroke="#000" fill="#d06060"><path d="M2 5L6 1H14V6L8 13H2Z" /><path d="M4 6L8 4V12M8 6L12 2M10 10V5L14 3" fill="none" stroke="#602020" /><path d="M5 7h2v4H5z" fill="#ddd" /></g>,
};

function TreeNode({ node }: { node: "open" | "closed" | "leaf" }) {
  return (
    <svg viewBox="0 0 15 20" className="h-5 w-[15px] shrink-0" shapeRendering="crispEdges" aria-hidden="true">
      <path d="M4.500 0V10.500H15" fill="none" stroke="#888" strokeDasharray="1 1" />
      {node === "closed" && <path d="M4.500 15V20" stroke="#888" strokeDasharray="1 1" />}
      {node !== "leaf" && <path d="M.5 6.500H8.500V14.500H.5Z" fill="#fff" stroke="#888" />}
      {node !== "leaf" && <path d={node === "open" ? "M2 10.500H7" : "M2 10.500H7M4.500 8V13"} stroke="#000" />}
    </svg>
  );
}

function ModelTree() {
  return (
    <ul className="w-[103px] shrink-0 overflow-hidden border-t-2 border-r border-l-2 border-t-[#777] border-r-[#ddd] border-l-[#696969] bg-white text-[13px] leading-[18px]">
      {TREE.map((row) => (
        <li key={row.label} className={`flex h-5 items-center pb-0.5 whitespace-nowrap ${row.indent}`}>
          {row.node && <TreeNode node={row.node} />}
          <svg viewBox="0 0 15 15" className="h-[15px] w-[15px] shrink-0" shapeRendering="crispEdges" aria-hidden="true">
            {TREE_ICONS[row.icon]}
          </svg>
          <span className={`ml-[3px] pl-0.5 ${row.selected ? "bg-[#f0f0f0]" : ""}`}>{row.label}</span>
        </li>
      ))}
    </ul>
  );
}

// Floor grid: two families of parallel lines, every fifth one is heavy.
const ORIGIN = { x: 8.3, y: 81.7 };
const AXIS_U = { x: 59.56, y: 99.96 };
const AXIS_V = { x: 64.79, y: -105.81 };

type Vector = { x: number; y: number };

function gridPath(along: Vector, across: Vector, major: boolean) {
  const parts: string[] = [];
  for (let i = -60; i <= 160; i++) {
    if ((i % 5 === 0) !== major) continue;
    const x = ORIGIN.x + (across.x * i) / 5;
    const y = ORIGIN.y + (across.y * i) / 5;
    parts.push(`M${x - along.x * 12} ${y - along.y * 12}L${x + along.x * 32} ${y + along.y * 32}`);
  }
  return parts.join("");
}

function Viewport() {
  return (
    <main className="min-w-0 flex-1 overflow-hidden border-t-2 border-l-2 border-[#777] bg-white">
      <svg className="h-full w-full" fill="none" shapeRendering="crispEdges" role="img" aria-label="3D model view">
        <g stroke="#dfdfdf">
          <path d={gridPath(AXIS_U, AXIS_V, false)} />
          <path d={gridPath(AXIS_V, AXIS_U, false)} />
          <path d={gridPath(AXIS_U, AXIS_V, true)} strokeWidth="2" />
          <path d={gridPath(AXIS_V, AXIS_U, true)} strokeWidth="2" />
        </g>
        <path d="M365 -1H709L1253 367L371 382Z" fill="#e900e9" fillOpacity=".9" stroke="#800080" />
        <path d="M405 340L878 373" stroke="#20c020" strokeDasharray="2 6" />
        <path d="M886 374L1600 423" stroke="#000" strokeDasharray="2 6" />
        <path d="M403 384L1600 467" stroke="#00f000" strokeDasharray="2 6" />
        <path d="M371 381L357 359M356 366L357 359L366 366" stroke="#0000e0" />
        <path d="M371 381L396 341" stroke="#00e000" strokeWidth="2" />
        <path d="M371 381L386 357" stroke="#0040c0" />
        <path d="M379 360L386 357L384 368" stroke="#e0d020" />
        <path d="M382 383H398M389 380L398 384L393 387" stroke="#107010" />
        <path d="M396 335L401 340L396 345L391 340Z" fill="#10f010" stroke="#10d010" />
        <path d="M395 340h2" stroke="#e020e0" />
        <rect x="287" y="239" width="209" height="224" rx="3" stroke="#ff1f10" strokeWidth="4" shapeRendering="auto" />
      </svg>
    </main>
  );
}

const MEASUREMENTS = [
  "Position1(Reference) = [-36, 0, 0]mm",
  "Position2(Current) = [-36, 0, 1]mm",
  "Distance = 1mm",
  "X Distance = 0mm",
  "Y Distance = 0mm",
  "Z Distance = 1mm",
  "Angle(P2O - P1O) = 1.59114027119deg",
].join("\n");

function MeasureDialog() {
  return (
    <div role="dialog" aria-labelledby="measure-title" className="absolute top-[2px] left-0 z-20 flex h-[353px] w-[272px] flex-col border-r border-b border-[#999] bg-[#f0f0f0] shadow-[2px_4px_12px_rgba(0,0,0,0.35)]">
      <header className="flex h-[30px] shrink-0 items-center bg-white pr-2 pl-[2px]">
        <WindowIcon />
        <h1 id="measure-title" className="ml-[6px] flex-1 text-[13px] text-[#999]">Measure Data</h1>
        <button type="button" aria-label="Close dialog" className="text-[#777]">
          <svg viewBox="0 0 11 11" className="h-[11px] w-[11px]" aria-hidden="true"><path d="M0 0L11 11M11 0L0 11" stroke="currentColor" /></svg>
        </button>
      </header>
      <div className="mt-[11px] mr-[11px] ml-[6px] flex h-[266px] border-t-2 border-r border-b border-l-2 border-t-[#777] border-r-white border-b-white border-l-[#777]">
        <textarea
          readOnly
          aria-label="Measurements"
          defaultValue={MEASUREMENTS}
          className="h-full min-w-0 flex-1 resize-none overflow-hidden pt-0.5 pl-[3px] font-['Noto_Sans',sans-serif] text-[11px] leading-[13px] whitespace-pre outline-none"
        />
        <div className="flex w-[18px] shrink-0 flex-col items-center justify-between border-l border-white py-[3px] pr-0.5 text-[#b8b8b8]">
          <ChevronUp className="h-3 w-3" strokeWidth={3} aria-hidden="true" />
          <ChevronDown className="h-3 w-3" strokeWidth={3} aria-hidden="true" />
        </div>
      </div>
      <div className="mt-[11px] flex justify-center pl-[7px]">
        <button type="button" className="h-[23px] w-[75px] border-t border-r-2 border-b-2 border-l border-t-white border-r-[#777] border-b-[#777] border-l-white text-[11px]">
          Close
        </button>
      </div>
      <svg viewBox="0 0 11 11" className="absolute right-0 bottom-0 h-[11px] w-[11px]" aria-hidden="true">
        <path d="M0 11L11 0M4 11L11 4M8 11L11 8" stroke="#999" strokeWidth="1.500" />
      </svg>
      <div className="pointer-events-none absolute top-[32px] left-[4px] h-[115px] w-[235px] rounded-[5px] border-4 border-[#ff1f10]" />
      <div className="pointer-events-none absolute top-[109px] left-[11px] h-[13px] w-[100px] rounded-[4px] border border-[#ff1f10]" />
    </div>
  );
}

export default function App() {
  return (
    <div className="flex h-screen flex-col overflow-hidden bg-[#f0f0f0] font-['Noto_Sans','Noto_Sans_CJK_SC',sans-serif] text-black">
      <MenuBar />
      <Toolbars />
      <div className="relative flex min-h-0 flex-1">
        <div className="mr-[6px] flex w-[240px] shrink-0 flex-col">
          <ProjectPanel />
          <PropertiesPanel />
        </div>
        <ModelTree />
        <div className="w-1 shrink-0" />
        <Viewport />
        <MeasureDialog />
      </div>
    </div>
  );
}
